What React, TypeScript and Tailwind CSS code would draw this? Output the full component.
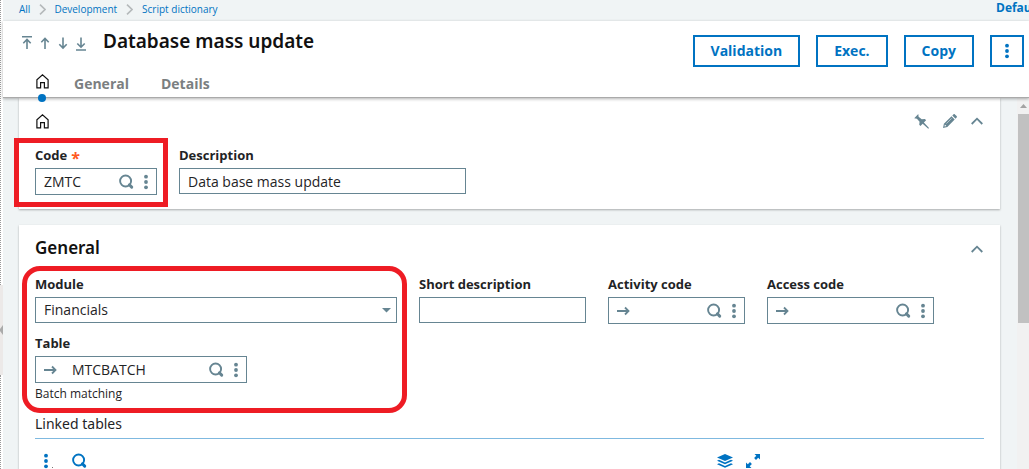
import React from "react";

const ICON = "text-[#668592]";

function HomeIcon() {
  return (
    <svg width="13" height="15" viewBox="0 0 13 15" fill="none" stroke="#111" strokeWidth="1.2" aria-hidden="true">
      <path d="M.9 13.9V5.8L6.5.9l5.6 4.9v8.1H8.4V8.6H4.6v5.3z" />
    </svg>
  );
}

function SearchIcon() {
  return (
    <svg width="15" height="16" viewBox="0 0 15 16" fill="none" stroke="currentColor" aria-hidden="true">
      <circle cx="6.6" cy="7" r="5.5" strokeWidth="1.9" />
      <path d="M10.4 10.8l2.300 2.300" strokeWidth="3" strokeLinecap="round" />
    </svg>
  );
}

function DotsIcon() {
  return (
    <svg width="4" height="16" viewBox="0 0 4 16" fill="currentColor" aria-hidden="true">
      <circle cx="2" cy="2.700" r="1.9" />
      <circle cx="2" cy="8" r="1.9" />
      <circle cx="2" cy="13.300" r="1.9" />
    </svg>
  );
}

function RightArrow() {
  return (
    <svg width="13" height="10" viewBox="0 0 13 10" fill="none" stroke="currentColor" strokeWidth="1.8" aria-hidden="true">
      <path d="M0 5h11.500M8 1.500L11.500 5 8 8.500" />
    </svg>
  );
}

function ChevronUp() {
  return (
    <svg width="12" height="8" viewBox="0 0 12 8" fill="none" stroke="currentColor" strokeWidth="1.8" aria-hidden="true">
      <path d="M.7 7L6 1.7 11.3 7" />
    </svg>
  );
}

function Crumb() {
  return (
    <svg width="7" height="11" viewBox="0 0 7 11" fill="none" stroke="#b5b9bb" strokeWidth="1.6" aria-hidden="true">
      <path d="M1 .7l5 4.8-5 4.8" />
    </svg>
  );
}

const records = [
  { name: "First record", d: "M1 1.7h10M6 14V4.500M2.300 8.200L6 4.500l3.700 3.700" },
  { name: "Previous record", d: "M6 14V3.500M2.300 7.200L6 3.500l3.700 3.700" },
  { name: "Next record", d: "M6 2.500V13M2.300 9.300L6 13l3.700-3.700" },
  { name: "Last record", d: "M1 15h10M6 2.500v9.700M2.300 8.500L6 12.200l3.700-3.700" },
];

const labelClass = "text-[13px] leading-[18px] font-bold text-[#1f2426]";
const boxClass = "w-full border border-[#668592] bg-white";

function Lookup({ id, label, value = "", jump = true, required = false, width }: {
  id: string; label: string; value?: string; jump?: boolean; required?: boolean; width: string;
}) {
  return (
    <div className={`flex flex-col gap-1 ${width}`}>
      <label htmlFor={id} className={`${labelClass} flex h-[18px]`}>
        {label}
        {required && <span className="ml-1 text-base leading-6 font-bold text-[#ff5a1f]">*</span>}
      </label>
      <div className={`${boxClass} ${ICON} flex h-[27px] items-center px-2`}>
        {jump && (
          <button type="button" aria-label={`Open ${label}`} className="mr-[15px] shrink-0"><RightArrow /></button>
        )}
        <input id={id} defaultValue={value} className="min-w-0 flex-1 bg-transparent text-sm text-[#1f2426] outline-none" />
        <button type="button" aria-label={`Search ${label}`} className="mr-[10px] shrink-0"><SearchIcon /></button>
        <button type="button" aria-label={`${label} actions`} className="shrink-0"><DotsIcon /></button>
      </div>
    </div>
  );
}

export default function App() {
  const action = "flex h-8 items-center border-2 border-[#0073c2] bg-white text-sm font-bold text-[#0073c2]";
  return (
    <div className="flex h-screen overflow-hidden bg-white font-['Open_Sans',sans-serif] text-[#1f2426]">
      <aside className="flex w-[3px] shrink-0 flex-col">
        <div className="h-[285px] w-px border-l border-dotted border-[#999]" />
        <button type="button" aria-label="Expand side panel" className="flex h-[90px] items-center bg-[#ece9e8]">
          <svg width="3" height="10" viewBox="0 0 3 10" fill="#aaa" aria-hidden="true"><path d="M3 0v10L0 6V4z" /></svg>
        </button>
        <div className="w-px flex-1 border-l border-dotted border-[#999]" />
      </aside>

      <div className="flex min-w-0 flex-1 flex-col bg-[#f0f4f5]">
        <div className="flex h-[21px] shrink-0 items-start justify-between overflow-hidden pl-4">
          <nav aria-label="Breadcrumb" className="flex items-center pt-px text-[10px] leading-4 text-[#0073c2]">
            <a href="#all">All</a>
            <span className="mr-2 ml-[9px]"><Crumb /></span>
            <a href="#development">Development</a>
            <span className="mx-[9px]"><Crumb /></span>
            <a href="#script-dictionary">Script dictionary</a>
          </nav>
          <a href="#default" className="w-[33px] overflow-hidden text-[12px] leading-4 font-bold text-[#0073c2]">Default</a>
        </div>

        <header className="relative z-10 flex shrink-0 items-start justify-between border-b border-[#aaa] bg-white pr-[5px] shadow-[0_1px_3px_rgba(0,0,0,0.3)]">
          <div>
            <div className="flex h-10 items-center pl-[18px]">
              <div className="flex gap-[6px] pt-1 text-[#668592]">
                {records.map((r) => (
                  <button key={r.name} type="button" aria-label={r.name}>
                    <svg width="12" height="16" viewBox="0 0 12 16" fill="none" stroke="currentColor" strokeWidth="1.6" aria-hidden="true"><path d={r.d} /></svg>
                  </button>
                ))}
              </div>
              <h1 className="ml-4 font-['Noto_Sans',sans-serif] text-[19px] leading-7 font-semibold text-[#111]">Database mass update</h1>
            </div>
            <nav aria-label="Sections" className="flex h-9 items-center pt-[10px] pl-[33px] text-sm font-bold text-[#7b7f81]">
              <a href="#home" aria-label="Home" className="relative flex h-full items-center pb-[5px]">
                <HomeIcon />
                <span className="absolute -bottom-[5px] left-[2px] size-2 rounded-full bg-[#0073c2]" />
              </a>
              <a href="#general" className="ml-[25px]">General</a>
              <a href="#details" className="ml-8">Details</a>
            </nav>
          </div>
          <div className="flex gap-4 pt-[14px]">
            <button type="button" className={`${action} px-4`}>Validation</button>
            <button type="button" className={`${action} px-4`}>Exec.</button>
            <button type="button" className={`${action} px-4`}>Copy</button>
            <button type="button" aria-label="More actions" className={`${action} w-[34px] justify-center`}><DotsIcon /></button>
          </div>
        </header>

        <div className="flex min-h-0 flex-1">
          <main className="flex min-w-0 flex-1 flex-col gap-4 overflow-hidden pr-[17px] pl-4">
            <section aria-label="Home" className="shrink-0 bg-white px-4 pt-[15px] pb-[14px] shadow-[0_1px_2px_rgba(0,0,0,0.3)]">
              <div className="flex h-4 items-center justify-between pl-px">
                <HomeIcon />
                <div className="flex items-center gap-[14px] text-[#668592]">
                  <button type="button" aria-label="Pin">
                    <svg width="15" height="15" viewBox="0 0 14 14" fill="currentColor" aria-hidden="true">
                      <path d="M4 0l.3 2.500 2.900 2.300 3-.1 1.100 1.100-2.100 2.100 4.800 5.200-.7.700-5.200-4.600-2.100 1.900-1.100-1.100.3-2.800L2.700 4.500.2 4z" />
                    </svg>
                  </button>
                  <button type="button" aria-label="Edit">
                    <svg width="14" height="14" viewBox="0 0 14 14" fill="currentColor" aria-hidden="true">
                      <path d="M9.300 1.500l3.200 3.200 1.100-1.100c.5-.5.5-1 0-1.500L11.900.4c-.5-.5-1-.5-1.500 0zM8.500 2.300L.9 9.700 0 14l4.300-.9 7.400-7.600zM1.900 10.600L3.400 12.100l-1.700.4-.2-.2z" fillRule="evenodd" />
                      <path d="M3.400 9.600l5.200-5.200" stroke="#fff" strokeWidth=".5" />
                    </svg>
                  </button>
                  <button type="button" aria-label="Collapse Home" className="mr-px"><ChevronUp /></button>
                </div>
              </div>
              <div className="mt-[17px] flex items-start gap-[22px]">
                <div className="relative">
                  <Lookup id="code" label="Code" value="ZMTC" jump={false} required width="w-[122px]" />
                  <div className="pointer-events-none absolute -top-2 -right-[11px] -bottom-3 -left-[21px] border-[5px] border-[#ee1c24]" />
                </div>
                <div className="flex w-[287px] flex-col gap-1">
                  <label htmlFor="description" className={labelClass}>Description</label>
                  <input id="description" defaultValue="Data base mass update" className={`${boxClass} h-[26px] px-2 text-sm`} />
                </div>
              </div>
            </section>

            <section aria-labelledby="general-title" className="flex-1 bg-white px-4 pt-[11px] shadow-[0_1px_2px_rgba(0,0,0,0.3)]">
              <div className="flex items-center justify-between">
                <h2 id="general-title" className="font-['Noto_Sans',sans-serif] text-[17px] leading-6 font-semibold text-[#111]">General</h2>
                <button type="button" aria-label="Collapse General" className="mt-[2px] mr-px text-[#668592]"><ChevronUp /></button>
              </div>
              <div className="mt-[15px] flex items-start gap-[22px]">
                <div className="relative flex w-[362px] flex-col">
                  <div className="flex flex-col gap-1">
                    <label htmlFor="module" className={labelClass}>Module</label>
                    <div className="relative">
                      <select id="module" className={`${boxClass} block h-[26px] appearance-none px-2 text-sm`}>
                        <option>Financials</option>
                      </select>
                      <svg className="pointer-events-none absolute top-[11px] right-[6px]" width="9" height="5" viewBox="0 0 9 5" fill="#668592" aria-hidden="true"><path d="M0 0h9L4.500 4.500z" /></svg>
                    </div>
                  </div>
                  <div className="mt-[11px]">
                    <Lookup id="table" label="Table" value="MTCBATCH" width="w-[212px]" />
                  </div>
                  <p className="mt-[2px] text-xs leading-[18px]">Batch matching</p>
                  <div className="pointer-events-none absolute -top-[9px] -right-[10px] -bottom-[10px] -left-[13px] rounded-[18px] border-[5px] border-[#ee1c24]" />
                </div>
                <div className="flex w-[167px] flex-col gap-1">
                  <label htmlFor="short" className={labelClass}>Short description</label>
                  <input id="short" className={`${boxClass} h-[26px] px-2 text-sm`} />
                </div>
                <Lookup id="activity" label="Activity code" width="w-[137px]" />
                <Lookup id="access" label="Access code" width="w-[167px]" />
              </div>
              <h3 className="mt-[11px] border-b border-[#7fb9e0] pb-1 font-['Noto_Sans',sans-serif] text-sm leading-5">Linked tables</h3>
              <div className="mt-[14px] flex items-center pl-[9px] text-[#0073c2]">
                <button type="button" aria-label="Linked tables actions" className="flex items-end gap-1">
                  <DotsIcon /><span className="mb-px size-px bg-[#777]" />
                </button>
                <button type="button" aria-label="Search linked tables" className="ml-[19px]"><SearchIcon /></button>
                <div className="flex flex-1 items-center justify-end gap-[13px] pr-[224px]">
                  <button type="button" aria-label="Layers">
                    <svg width="16" height="14" viewBox="0 0 16 14" fill="currentColor" aria-hidden="true">
                      <path d="M8 0l8 3.500L8 7 0 3.500zM0 6.700l2-.9 6 2.600 6-2.600 2 .9-8 3.500zM0 10.200l2-.9 6 2.600 6-2.600 2 .9L8 13.700z" />
                    </svg>
                  </button>
                  <button type="button" aria-label="Full screen">
                    <svg width="14" height="14" viewBox="0 0 14 14" fill="currentColor" aria-hidden="true">
                      <path d="M8.500 0H14v5.500l-1.800-1.800-2.200 2.200L8.100 4l2.200-2.200zM0 8.500l1.800 1.800L4 8.100 5.900 10l-2.200 2.200L5.500 14H0z" />
                    </svg>
                  </button>
                </div>
              </div>
            </section>
          </main>
          <div aria-hidden="true" className="flex w-3 shrink-0 flex-col bg-[#f1f1f1]">
            <div className="flex h-4 items-center justify-center pl-px">
              <svg width="7" height="4" viewBox="0 0 7 4" fill="#a3a3a3"><path d="M3.500 0L7 4H0z" /></svg>
            </div>
            <div className="ml-px h-[209px] bg-[#c1c1c1]" />
          </div>
        </div>
      </div>
    </div>
  );
}
